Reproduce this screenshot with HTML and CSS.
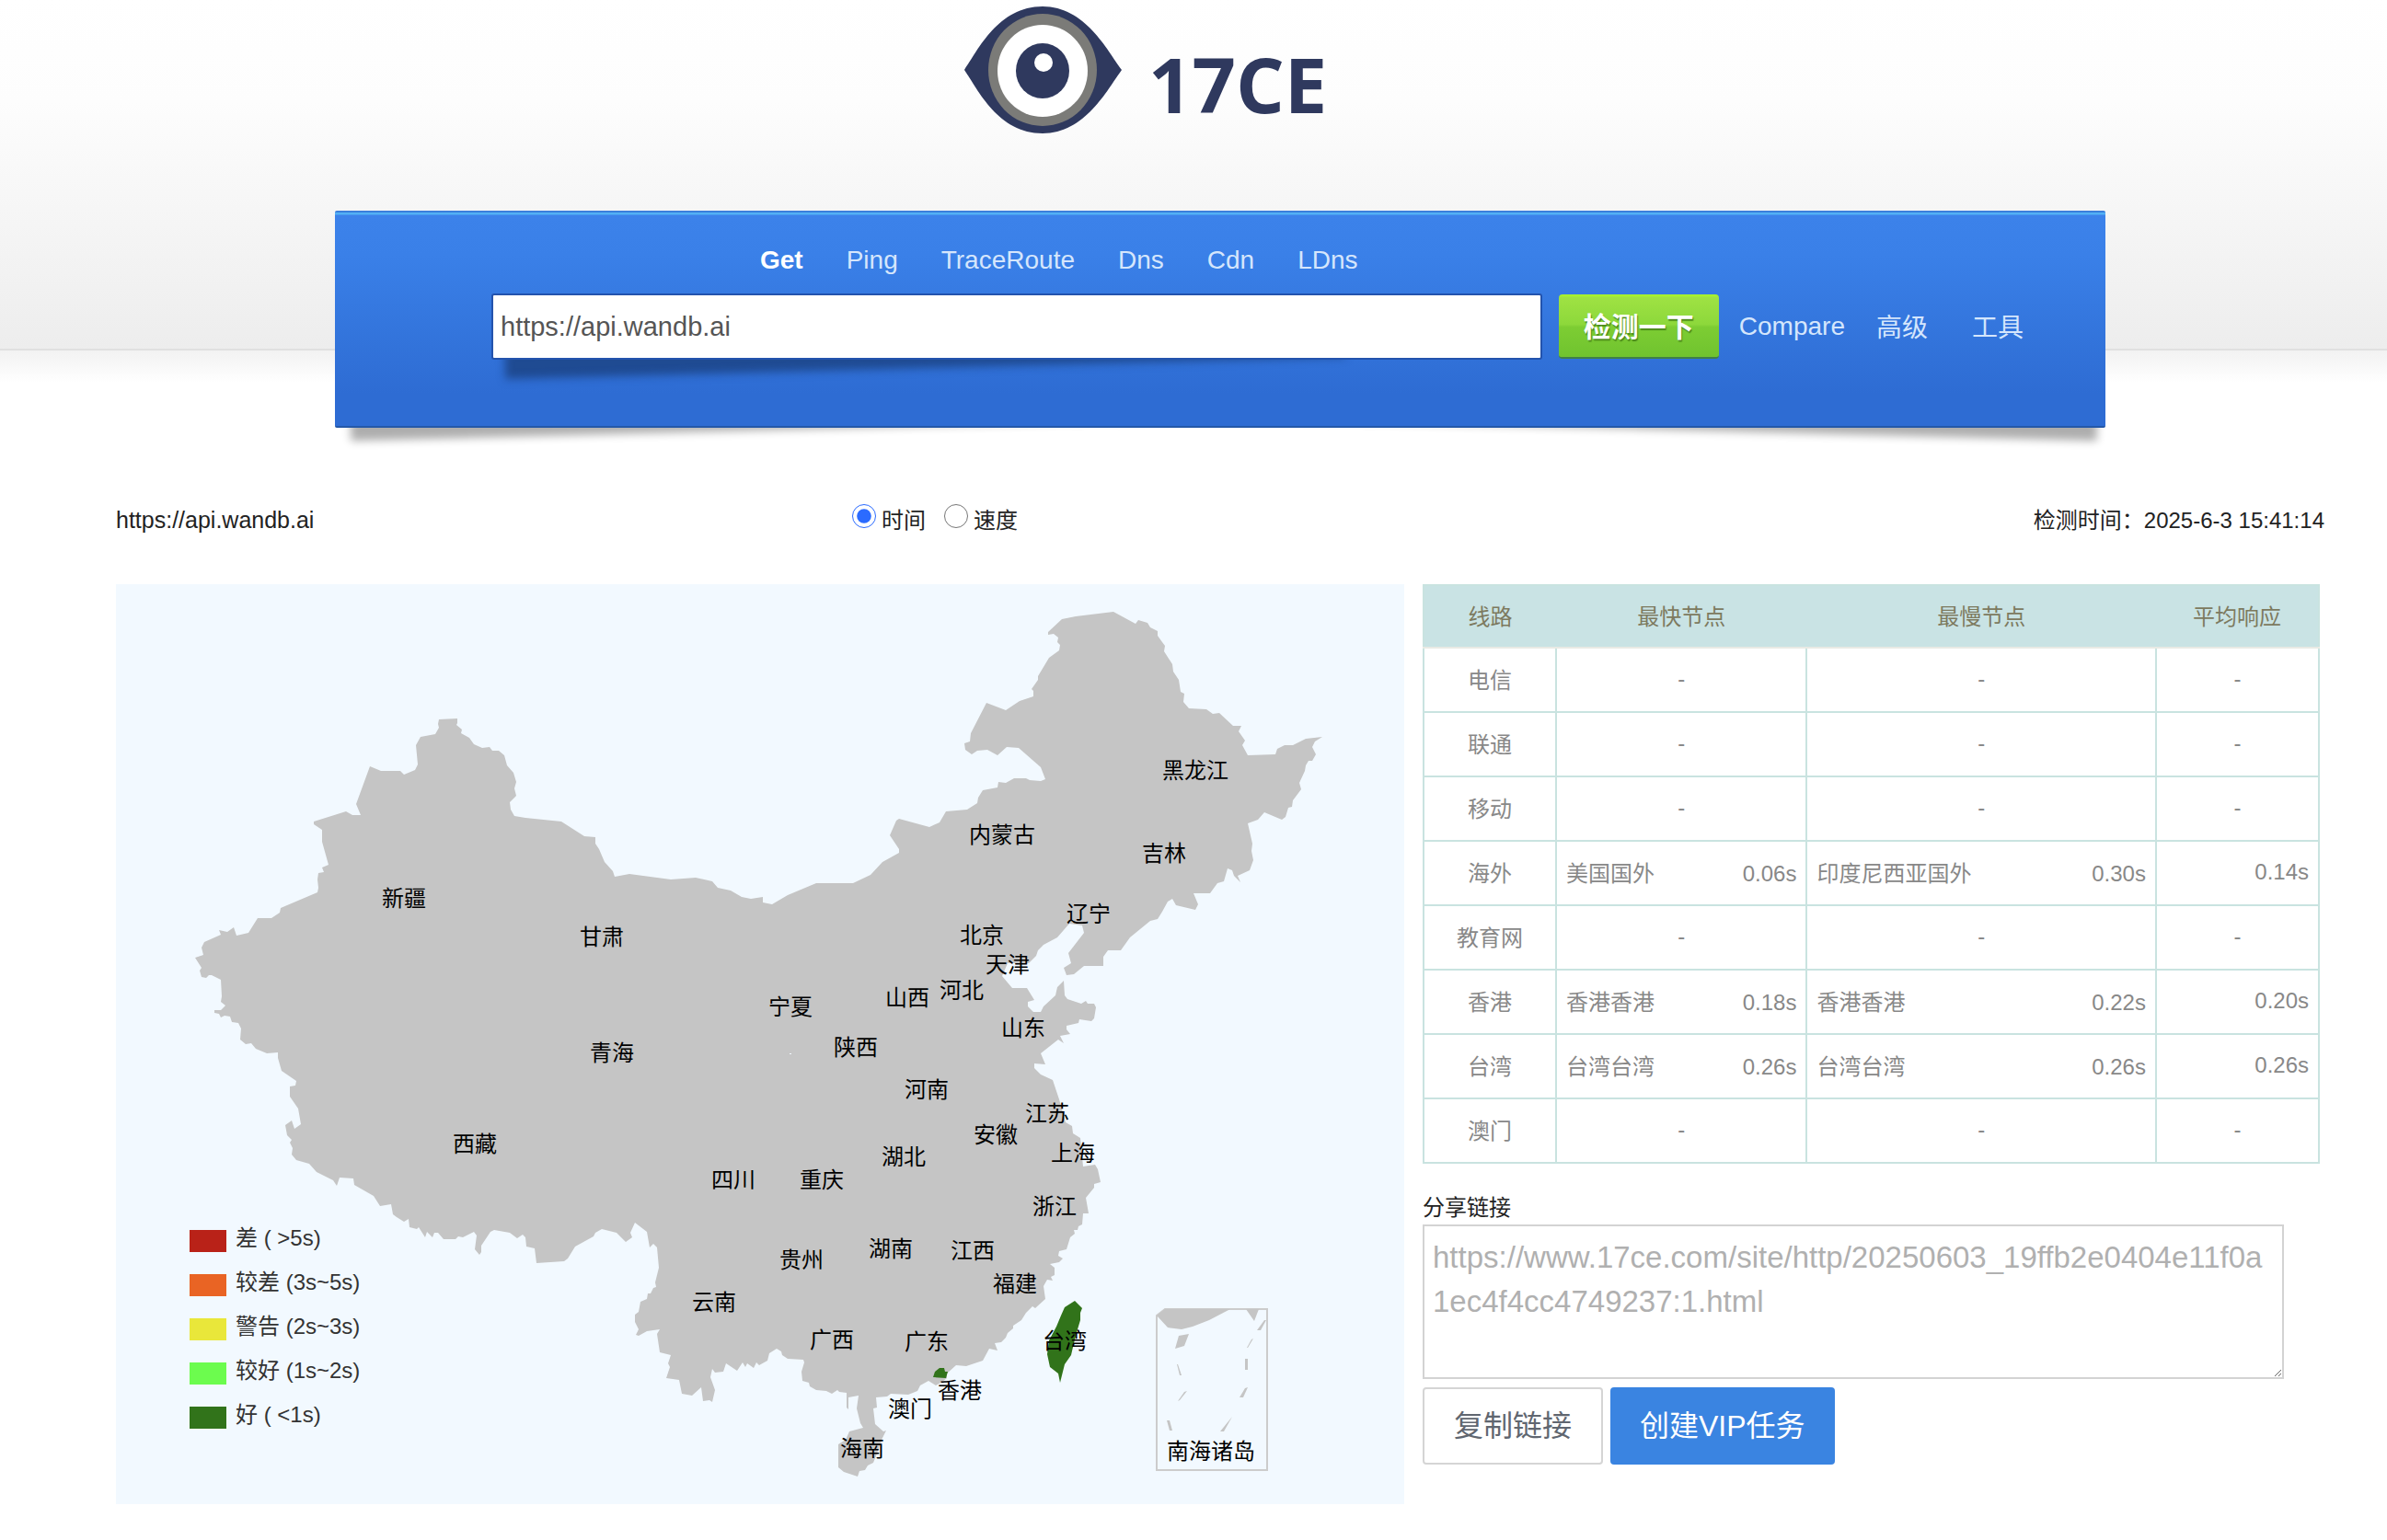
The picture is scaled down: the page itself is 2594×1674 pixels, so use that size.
FILE: index.html
```html
<!DOCTYPE html>
<html lang="zh-CN">

<head>
    <meta charset="UTF-8">
    <meta name="viewport" content="width=device-width, initial-scale=1.0">
    <title>17CE</title>
    <link rel="stylesheet" href="styles.css">
</head>

<body>
    <div class="container">
        <header class="logo">
            <svg viewBox="0 0 560 150" role="img" aria-label="17CE">
                <path fill="#2f395e" d="M2 76 C17 54 39 7 87 7 C133 7 157 54 173 76 C157 98 133 145 87 145 C39 145 17 98 2 76 Z" />
                <ellipse cx="87" cy="76" rx="59" ry="61" fill="#7b7b78" />
                <ellipse cx="87" cy="77" rx="49" ry="50" fill="#fff" />
                <ellipse cx="87" cy="77" rx="29" ry="30" fill="#2f395e" />
                <circle cx="88" cy="68" r="10" fill="#fff" />
                <text x="202" y="123" class="logo-text">17CE</text>
            </svg>
        </header>

        <div class="banner-wrap">
            <div class="banner">
                <nav class="tabs">
                    <a href="#" class="active">Get</a>
                    <a href="#">Ping</a>
                    <a href="#">TraceRoute</a>
                    <a href="#">Dns</a>
                    <a href="#">Cdn</a>
                    <a href="#">LDns</a>
                </nav>
                <form action="#" class="search">
                    <div class="url-box">
                        <input type="text" name="url" aria-label="URL" value="https://api.wandb.ai">
                    </div>
                    <button type="button" class="btn-check">检测一下</button>
                    <a href="#" class="compare">Compare</a>
                    <a href="#" class="advanced">高级</a>
                    <a href="#" class="tools">工具</a>
                </form>
            </div>
        </div>

        <div class="info">
            <span class="info-url">https://api.wandb.ai</span>
            <div class="radios">
                <input type="radio" name="type" id="time" checked>
                <label for="time">时间</label>
                <input type="radio" name="type" id="speed">
                <label for="speed">速度</label>
            </div>
            <span class="info-time">检测时间：2025-6-3 15:41:14</span>
        </div>

        <main class="result">
            <div class="map">
                <svg viewBox="0 0 1400 1000">
                    <!-- mainland and Hainan -->
                    <polygon class="land" points="351,147 371,146 371,151 370,153 376,158 375,162 384,167 389,174 398,178 406,177 409,181 416,181 422,186 425,197 432,205 435,215 433,222 435,230 428,237 429,245 433,252 445,254 484,258 509,274 521,275 521,282 525,288 531,302 540,312 542,318 558,315 603,321 630,319 648,323 654,330 668,333 680,340 690,342 703,340 703,346 713,348
                        730,338 761,325 801,325 820,316 833,302 851,292 851,288 841,273 848,257 851,255 884,264 895,259 902,247 925,245 936,238 937,232 942,224 958,221 959,215 967,216 976,211 989,211 993,213 1005,214 1010,212 1005,199 981,178 968,177 958,186 947,180 936,181 930,185 923,180 922,173 928,171 929,162 946,129 967,137 982,127 997,122 997,116 995,114 1002,104 1002,100 1014,80 1025,72 1026,66 1023,63 1024,58 1019,54 1013,55 1013,52 1028,38 1043,35 1084,30
                        1108,43 1111,39 1121,42 1124,47 1132,51 1132,56 1137,63 1140,67 1139,73 1148,87 1149,95 1155,104 1157,117 1161,119 1160,128 1166,135 1185,136 1192,141 1199,140 1214,154 1223,154 1220,160 1227,170 1224,175 1230,186 1260,185 1262,179 1270,175 1279,175 1293,168 1311,166 1303,171 1300,177 1304,185 1300,192 1296,192 1293,197 1292,203 1286,216 1288,223 1279,235 1278,242 1274,243 1271,253 1267,256 1248,248 1241,256 1230,260 1235,282 1234,290 1236,300 1232,311 1219,317 1222,324 1215,317 1213,311 1208,309 1204,323 1197,325 1189,336 1171,336 1176,348 1173,354 1152,349 1148,342 1143,345 1137,356 1132,364 1124,366 1102,384 1092,398 1078,398 1073,405 1073,415 1052,415 1041,424 1033,425 1030,417 1038,412 1035,401 1052,379 1050,371 1036,369
                        1023,384 1008,392 1002,398 1000,404 992,412 969,412 963,426 974,439 990,439 998,452 991,454 991,459 997,465 1005,465 1008,459 1021,447 1023,438 1030,431 1031,447 1034,451 1049,456 1054,453 1056,456 1063,456 1065,460 1063,472 1060,475 1047,473 1046,477 1033,480 1033,484 1037,489 1026,491 1030,499 1024,495 1005,510 1010,522 998,521 998,526 1005,533 1018,539 1025,560 1032,585 1039,589 1040,597 1048,602 1051,633 1064,631 1067,636 1070,650 1063,652 1063,656 1054,667 1057,684 1051,684 1050,696 1046,698 1045,702 1041,702 1042,706 1037,710 1033,723 1025,725 1024,730 1029,733 1025,737 1015,739 1020,743 1020,751 1016,753 1018,757 1012,756 1008,763 1010,777 999,787 996,785 989,792 984,800 975,806 975,809 969,814 967,819 962,824 955,825 958,833 949,831 942,844 924,850 913,849
                        903,858 903,863 898,867 891,871 883,866 874,871 871,877 861,881 842,880 838,883 826,884 827,895 823,896 825,913 834,921 837,920 832,930 827,945 823,955 817,958 814,963 808,964 806,970 791,965 785,960 785,935 793,930 797,921 812,917 809,912 805,896 807,882 796,884 796,897 794,895 794,879 786,878 784,876 778,880 772,877 761,876 754,872 753,868 746,866 745,856 748,846 747,843 730,842 724,838 723,834 718,831 710,836 708,844 699,849 696,846 693,852 686,847 684,851 681,846 675,855 663,847 660,856 651,857 648,853 646,862 651,876 648,889 645,887 638,888 636,873 626,882 615,880 612,865 598,863 602,851 600,847 603,838 591,835 588,815 591,810 577,812 568,817 565,816 568,810 564,802 564,794 568,791 570,780 577,777 578,771 581,771 584,765 587,764 586,759 590,743 588,721 584,717 580,721 577,704
                        564,694 559,705 561,710 554,715 544,705 528,701 521,705 519,709 499,720 491,733 487,736 457,738 455,722 446,720 445,710 442,707 436,711 428,705 411,702 407,704 397,719 397,726 395,729 390,723 392,708 389,704 377,710 372,709 369,712 356,712 350,705 346,705 344,710 338,704 336,710 329,699 327,701 319,699 318,690 313,693 305,688 301,685 299,674 287,676 280,665 259,653 258,646 243,645 240,654 236,648 218,639 210,630 196,626 191,620 192,613 189,607 191,604 186,599 184,588 191,583 194,592 201,587 198,570 189,557 189,546 195,545 196,540 180,529 176,515 176,509 164,510 152,505 147,499 141,500 135,495 136,483 133,477 126,476 124,470 118,469 114,471 112,467 107,466 107,463 114,463 119,458 114,454 115,448 114,430 104,425 101,425 98,428 93,427 91,420 93,417 86,406 95,403 93,395 96,389 114,381 112,376 121,378 128,373 131,382 144,379 154,363 169,363 178,357 179,352 219,335 220,330 219,321 220,314 226,313 224,308 231,305 224,280 224,267 215,261 215,258 250,247 257,251 266,251 261,239 276,198 288,203 309,203 313,207 325,202 328,196 326,175 331,166 347,163 351,156 350,152" />
                    <rect x="732" y="510" width="2" height="1" fill="#f2f9ff" />
                    <!-- Taiwan, Hong Kong -->
                    <polygon class="good" points="1042,779 1050,787 1048,792 1048,800 1045,810 1041,825 1038,838 1031,848 1026,868 1024,858 1015,851 1012,837 1014,822 1022,807 1027,795 1031,786" />
                    <polygon class="good" points="888,862 890,856 895,852 900,852 901,856 904,856 902,863" />
                    <!-- South China Sea inset -->
                    <path class="inset" d="M1131 795 L1140 788 H1251 V963 H1131 Z" />
                    <polygon class="land" points="1131,795 1140,788 1211,788 1188,800 1170,807 1158,810 1143,808" />
                    <polygon class="land" points="1228,788 1242,788 1237,801" />
                    <polygon class="land" points="1155,817 1166,815 1161,828 1151,831" />
                    <polygon class="land" points="1248,800 1250,800 1244,811 1240,811" />
                    <polygon class="land" points="1234,821 1236,820 1230,830 1229,830" />
                    <polygon class="land" points="1227,842 1230,842 1230,854 1227,854" />
                    <polygon class="land" points="1153,848 1154,848 1158,860 1156,860" />
                    <polygon class="land" points="1161,878 1164,877 1156,887 1154,888" />
                    <polygon class="land" points="1227,874 1230,873 1225,884 1221,884" />
                    <polygon class="land" points="1142,909 1145,909 1148,920 1145,920" />
                    <polygon class="land" points="1213,905 1204,921 1200,921" />
                    <g class="names">
                        <text x="313" y="350">新疆</text>
                        <text x="528" y="392">甘肃</text>
                        <text x="733" y="468">宁夏</text>
                        <text x="1173" y="211">黑龙江</text>
                        <text x="963" y="281">内蒙古</text>
                        <text x="1139" y="301">吉林</text>
                        <text x="1057" y="367">辽宁</text>
                        <text x="941" y="390">北京</text>
                        <text x="969" y="422">天津</text>
                        <text x="919" y="450">河北</text>
                        <text x="860" y="458">山西</text>
                        <text x="986" y="491">山东</text>
                        <text x="804" y="512">陕西</text>
                        <text x="539" y="518">青海</text>
                        <text x="390" y="617">西藏</text>
                        <text x="671" y="656">四川</text>
                        <text x="650" y="789">云南</text>
                        <text x="881" y="558">河南</text>
                        <text x="1012" y="584">江苏</text>
                        <text x="956" y="607">安徽</text>
                        <text x="856" y="631">湖北</text>
                        <text x="1040" y="627">上海</text>
                        <text x="767" y="656">重庆</text>
                        <text x="1020" y="685">浙江</text>
                        <text x="842" y="731">湖南</text>
                        <text x="931" y="733">江西</text>
                        <text x="745" y="743">贵州</text>
                        <text x="977" y="769">福建</text>
                        <text x="778" y="830">广西</text>
                        <text x="881" y="832">广东</text>
                        <text x="1031" y="831">台湾</text>
                        <text x="917" y="885">香港</text>
                        <text x="863" y="905">澳门</text>
                        <text x="811" y="948">海南</text>
                        <text x="1190" y="951">南海诸岛</text>
                    </g>
                    <g class="legend">
                        <rect x="80" y="702" width="40" height="24" fill="#b92218" />
                        <text x="130" y="719">差 ( &gt;5s)</text>
                        <rect x="80" y="750" width="40" height="24" fill="#e96424" />
                        <text x="130" y="767">较差 (3s~5s)</text>
                        <rect x="80" y="798" width="40" height="24" fill="#e9e73a" />
                        <text x="130" y="815">警告 (2s~3s)</text>
                        <rect x="80" y="846" width="40" height="24" fill="#6cfc4e" />
                        <text x="130" y="863">较好 (1s~2s)</text>
                        <rect x="80" y="894" width="40" height="24" fill="#31731a" />
                        <text x="130" y="911">好 ( &lt;1s)</text>
                    </g>
                </svg>
            </div>

            <div class="side">
                <table>
                    <thead>
                        <tr>
                            <th class="col-line">线路</th>
                            <th class="col-fast">最快节点</th>
                            <th class="col-slow">最慢节点</th>
                            <th class="col-avg">平均响应</th>
                        </tr>
                    </thead>
                    <tbody>
                        <tr>
                            <td>电信</td>
                            <td>-</td>
                            <td>-</td>
                            <td>-</td>
                        </tr>
                        <tr>
                            <td>联通</td>
                            <td>-</td>
                            <td>-</td>
                            <td>-</td>
                        </tr>
                        <tr>
                            <td>移动</td>
                            <td>-</td>
                            <td>-</td>
                            <td>-</td>
                        </tr>
                        <tr>
                            <td>海外</td>
                            <td><div class="node"><span>美国国外</span><span>0.06s</span></div></td>
                            <td><div class="node"><span>印度尼西亚国外</span><span>0.30s</span></div></td>
                            <td class="right">0.14s</td>
                        </tr>
                        <tr>
                            <td>教育网</td>
                            <td>-</td>
                            <td>-</td>
                            <td>-</td>
                        </tr>
                        <tr>
                            <td>香港</td>
                            <td><div class="node"><span>香港香港</span><span>0.18s</span></div></td>
                            <td><div class="node"><span>香港香港</span><span>0.22s</span></div></td>
                            <td class="right">0.20s</td>
                        </tr>
                        <tr>
                            <td>台湾</td>
                            <td><div class="node"><span>台湾台湾</span><span>0.26s</span></div></td>
                            <td><div class="node"><span>台湾台湾</span><span>0.26s</span></div></td>
                            <td class="right">0.26s</td>
                        </tr>
                        <tr>
                            <td>澳门</td>
                            <td>-</td>
                            <td>-</td>
                            <td>-</td>
                        </tr>
                    </tbody>
                </table>

                <label for="share" class="share-label">分享链接</label>
                <textarea id="share" rows="3">https://www.17ce.com/site/http/20250603_19ffb2e0404e11f0a1ec4f4cc4749237:1.html</textarea>
                <div class="buttons">
                    <button type="button" class="btn">复制链接</button>
                    <button type="button" class="btn btn-primary">创建VIP任务</button>
                </div>
            </div>
        </main>
    </div>
</body>

</html>
```

FILE: styles.css
```css
* {
    margin: 0;
    padding: 0;
    box-sizing: border-box;
}

body {
    font-family: "Liberation Sans", "Noto Sans CJK SC", sans-serif;
    font-size: 24px;
    color: #222;
    background: linear-gradient(#fff 0, #fdfdfd 110px, #ededed 379px, #e0e0e0 379px, #e0e0e0 381px, #f2f2f2 381px, #fff 416px) no-repeat #fff;
}

a {
    color: #d5e6fc;
    text-decoration: none;
}

.container {
    padding: 0 68px 40px 126px;
}

.logo {
    display: flex;
    justify-content: center;
    height: 229px;
}

.logo svg {
    width: 560px;
    height: 150px;
}

.logo-text {
    font-family: "Open Sans", "Noto Sans", sans-serif;
    font-weight: bold;
    font-size: 83px;
    fill: #2f395e;
}

/* blue search banner */
.banner-wrap {
    position: relative;
    z-index: 0;
    max-width: 1924px;
    margin: 0 auto;
}

.banner-wrap::before,
.banner-wrap::after {
    content: "";
    position: absolute;
    z-index: -1;
    bottom: 24px;
    width: 45%;
    height: 40px;
    box-shadow: 0 27px 10px rgba(0, 0, 0, 0.32);
}

.banner-wrap::before {
    left: 16px;
    transform: rotate(-1.5deg);
}

.banner-wrap::after {
    right: 8px;
    transform: rotate(1.5deg);
}

.banner {
    position: relative;
    z-index: 1;
    padding: 32px 89px 72px 170px;
    border-top: 2px solid #3a7fdc;
    border-bottom: 2px solid #2458a8;
    border-radius: 2px;
    background: linear-gradient(#52b0f5 0, #52b0f5 2px, #3c82ea 3px, #3a80e8 20%, #2e6cd3 85%);
}

.tabs {
    display: flex;
    gap: 47px;
    padding-left: 292px;
    margin-bottom: 16px;
    font-size: 28px;
    line-height: 40px;
}

.tabs .active {
    color: #fff;
    font-weight: bold;
}

.search {
    display: flex;
    align-items: center;
    font-size: 28px;
}

.url-box {
    position: relative;
    flex: 1;
}

.url-box::before {
    content: "";
    position: absolute;
    z-index: -1;
    left: 14px;
    bottom: 18px;
    width: 80%;
    height: 30px;
    box-shadow: 0 27px 10px rgba(20, 50, 100, 0.6);
    transform: rotate(-1.5deg);
}

.url-box input {
    display: block;
    width: 100%;
    height: 72px;
    padding: 0 8px;
    border: 2px solid #2353ad;
    border-radius: 3px;
    background: #fff;
    color: #555;
    font-family: inherit;
    font-size: 29px;
}

.btn-check {
    width: 174px;
    height: 70px;
    margin-left: 18px;
    padding-bottom: 2px;
    border: 0;
    border-bottom: 2px solid #3f7f4a;
    border-radius: 4px;
    background: linear-gradient(#a6f030 0, #a6f030 2px, #9fe243 3px, #8dd83b 48%, #7dcd33 52%, #70c32f 100%);
    color: #fff;
    font-family: inherit;
    font-size: 30px;
    font-weight: bold;
    text-shadow: 1px 2px 1px #4d8a1c;
}

.compare {
    margin-left: 22px;
}

.advanced,
.tools {
    padding-bottom: 3px;
}

.advanced {
    margin-left: 34px;
}

.tools {
    margin-left: 48px;
}

/* line under the banner */
.info {
    display: grid;
    grid-template-columns: 1fr 1fr 1fr;
    align-items: center;
    height: 40px;
    margin: 80px 0 50px;
}

.info-url {
    font-size: 25px;
}

.info-time {
    padding-bottom: 3px;
    text-align: right;
}

.radios {
    display: flex;
    align-items: center;
}

.radios input {
    width: 26px;
    height: 26px;
    margin-bottom: 8px;
    accent-color: #2b6bff;
}

.radios label {
    margin: 0 20px 3px 6px;
}

.result {
    display: grid;
    grid-template-columns: 1400fr 975fr;
    gap: 20px;
    align-items: start;
    padding-right: 5px;
}

.map {
    background: #f2f9ff;
}

.map svg {
    display: block;
    width: 100%;
}

.land {
    fill: #c5c5c5;
}

.good {
    fill: #31731a;
}

.inset {
    fill: none;
    stroke: #ccc;
    stroke-width: 2;
}

.names {
    font-size: 24px;
    text-anchor: middle;
    fill: #000;
}

.legend text {
    fill: #333;
}

table {
    width: 100%;
    table-layout: fixed;
    border-collapse: collapse;
    border: 2px solid #c9e3e0;
    color: #888;
}

th {
    height: 68px;
    padding-bottom: 4px;
    background: #c9e3e4;
    color: #7d7a5f;
    font-weight: normal;
    border-bottom: 2px solid #e8eae4;
}

td {
    height: 70px;
    padding: 0 10px 3px;
    border: 2px solid #c9e3e0;
    text-align: center;
}

thead + tbody tr:first-child td {
    border-top-color: #e8eae4;
}

.col-line {
    width: 144px;
}

.col-fast {
    width: 28%;
}

.col-slow {
    width: 39%;
}

.node {
    display: flex;
    justify-content: space-between;
    align-items: baseline;
}

.right {
    text-align: right;
}

.share-label {
    display: block;
    margin-top: 30px;
    line-height: 36px;
}

textarea {
    display: block;
    width: 96%;
    height: 168px;
    padding: 10px 9px;
    border: 2px solid #d3d3d3;
    color: #b0b0b0;
    font-family: inherit;
    font-size: 33px;
    line-height: 48px;
    word-break: break-all;
}

.buttons {
    display: flex;
    gap: 8px;
    margin-top: 9px;
}

.btn {
    height: 84px;
    padding: 0 32px 6px;
    border: 2px solid #d5d5d5;
    border-radius: 4px;
    background: #fff;
    color: #606670;
    font-family: inherit;
    font-size: 32px;
}

.btn-primary {
    border: 0;
    background: #3a84e1;
    color: #fff;
}
```
